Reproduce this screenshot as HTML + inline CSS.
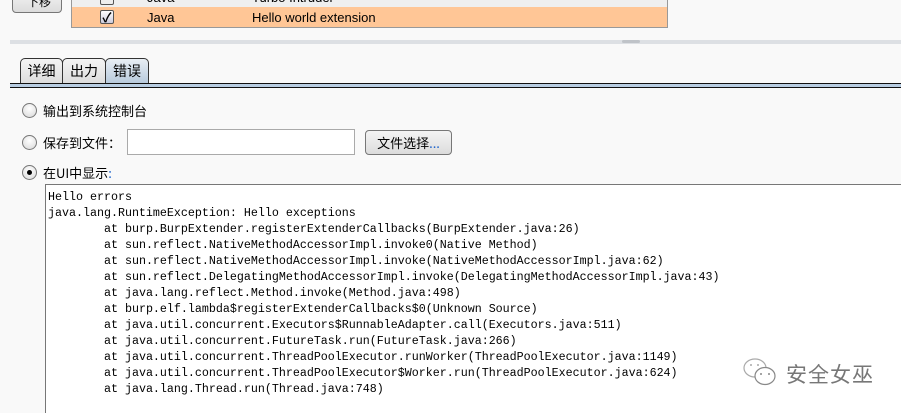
<!DOCTYPE html>
<html><head><meta charset="utf-8"><style>
*{margin:0;padding:0;box-sizing:border-box}
html,body{width:901px;height:413px;overflow:hidden}
body{background:#f9f9f9;position:relative;font-family:"Liberation Sans","Noto Sans CJK SC",sans-serif;font-size:13px;color:#000}
.abs{position:absolute}
.cjk{font-family:"Noto Sans CJK SC","WenQuanYi Zen Hei",sans-serif}
.tab{position:absolute;top:58px;height:26px;border:1px solid #333;border-bottom:none;border-radius:5px 5px 0 0;background:linear-gradient(#f4f4f4,#dcdcdc);font-size:14px;text-align:center;line-height:25px}
.radio{position:absolute;left:22px;width:15px;height:15px;border-radius:50%;border:1px solid #777;background:radial-gradient(circle at 50% 35%,#fff,#d8d8d8)}
.lbl{position:absolute;left:43px;font-size:13px}
pre{position:absolute;left:48px;top:189px;font-family:"Liberation Mono",monospace;font-size:11.67px;line-height:16px;color:#000}
</style></head><body>
<div class="abs" style="left:12px;top:-10px;width:50px;height:23px;border:1px solid #777;border-radius:4px;background:linear-gradient(#f4f4f4,#dcdcdc)"><span class="abs cjk" style="left:14px;top:2px;font-size:12px">下移</span></div>
<div class="abs" style="left:71px;top:0;width:597px;height:28px;border:1px solid #999;border-top:none;background:#f9f9f9"></div>
<div class="abs" style="left:72px;top:0;width:595px;height:7px;background:#efefef;overflow:hidden"><span class="abs" style="left:75px;top:-10px">Java</span><span class="abs" style="left:180px;top:-10px">Turbo Intruder</span></div>
<div class="abs" style="left:72px;top:7px;width:595px;height:20px;background:#ffc696"></div>
<div class="abs" style="left:100px;top:-7px;width:14px;height:12px;border:1px solid #555;border-radius:2px;background:#eee"></div>
<div class="abs" style="left:100px;top:10px;width:14px;height:14px;border:1px solid #555;border-radius:2px;background:linear-gradient(#fff,#ccd);font-size:13px;line-height:13px;text-align:center;font-weight:bold">✓</div>
<span class="abs" style="left:147px;top:10px">Java</span>
<span class="abs" style="left:252px;top:10px">Hello world extension</span>
<div class="abs" style="left:10px;top:40px;width:891px;height:4px;background:#dde0e4"></div>
<div class="abs" style="left:622px;top:40px;width:18px;height:3px;background:#bfc3c8;border-radius:2px"></div>
<div class="tab cjk" style="left:20px;width:43px">详细</div>
<div class="tab cjk" style="left:62px;width:44px">出力</div>
<div class="tab cjk" style="left:105px;width:44px;background:linear-gradient(#e8eef4,#b6c9dc)">错误</div>
<div class="abs" style="left:10px;top:83px;width:891px;height:5px;border-top:1px solid #111;border-bottom:1px solid #111;background:#b8cde2"></div>
<div class="radio" style="top:103px"></div>
<span class="lbl cjk" style="top:101px">输出到系统控制台</span>
<div class="radio" style="top:135px"></div>
<span class="lbl cjk" style="top:133px">保存到文件：</span>
<div class="abs" style="left:127px;top:129px;width:228px;height:26px;border:1px solid #aaa;background:#fff"></div>
<div class="abs cjk" style="left:365px;top:130px;width:87px;height:25px;border:1px solid #777;border-radius:4px;background:linear-gradient(#f4f4f4,#dcdcdc);text-align:center;line-height:23px">文件选择<span style="color:#2266cc">...</span></div>
<div class="radio" style="top:165px"><div class="abs" style="left:4px;top:4px;width:5px;height:5px;border-radius:50%;background:#000"></div></div>
<span class="lbl cjk" style="top:163px">在UI中显示<span style="color:#2266cc">:</span></span>
<div class="abs" style="left:45px;top:184px;width:860px;height:240px;border:1px solid #777;background:#fff"></div>
<pre>Hello errors
java.lang.RuntimeException: Hello exceptions
	at burp.BurpExtender.registerExtenderCallbacks(BurpExtender.java:26)
	at sun.reflect.NativeMethodAccessorImpl.invoke0(Native Method)
	at sun.reflect.NativeMethodAccessorImpl.invoke(NativeMethodAccessorImpl.java:62)
	at sun.reflect.DelegatingMethodAccessorImpl.invoke(DelegatingMethodAccessorImpl.java:43)
	at java.lang.reflect.Method.invoke(Method.java:498)
	at burp.elf.lambda$registerExtenderCallbacks$0(Unknown Source)
	at java.util.concurrent.Executors$RunnableAdapter.call(Executors.java:511)
	at java.util.concurrent.FutureTask.run(FutureTask.java:266)
	at java.util.concurrent.ThreadPoolExecutor.runWorker(ThreadPoolExecutor.java:1149)
	at java.util.concurrent.ThreadPoolExecutor$Worker.run(ThreadPoolExecutor.java:624)
	at java.lang.Thread.run(Thread.java:748)</pre>
<svg class="abs" style="left:741px;top:355px" width="40" height="34" viewBox="0 0 40 34"><ellipse cx="14" cy="13" rx="11" ry="9" fill="none" stroke="#aaa" stroke-width="1.2"/><ellipse cx="24" cy="21" rx="10" ry="8.5" fill="#fff" stroke="#888" stroke-width="1.2"/><circle cx="20" cy="19" r="1" fill="#888"/><circle cx="28" cy="19" r="1" fill="#888"/><circle cx="10" cy="10" r="1" fill="#aaa"/><circle cx="17" cy="10" r="1" fill="#aaa"/></svg>
<span class="abs cjk" style="left:786px;top:359px;font-size:21px;color:#777;letter-spacing:1px">安全女巫</span>
</body></html>
